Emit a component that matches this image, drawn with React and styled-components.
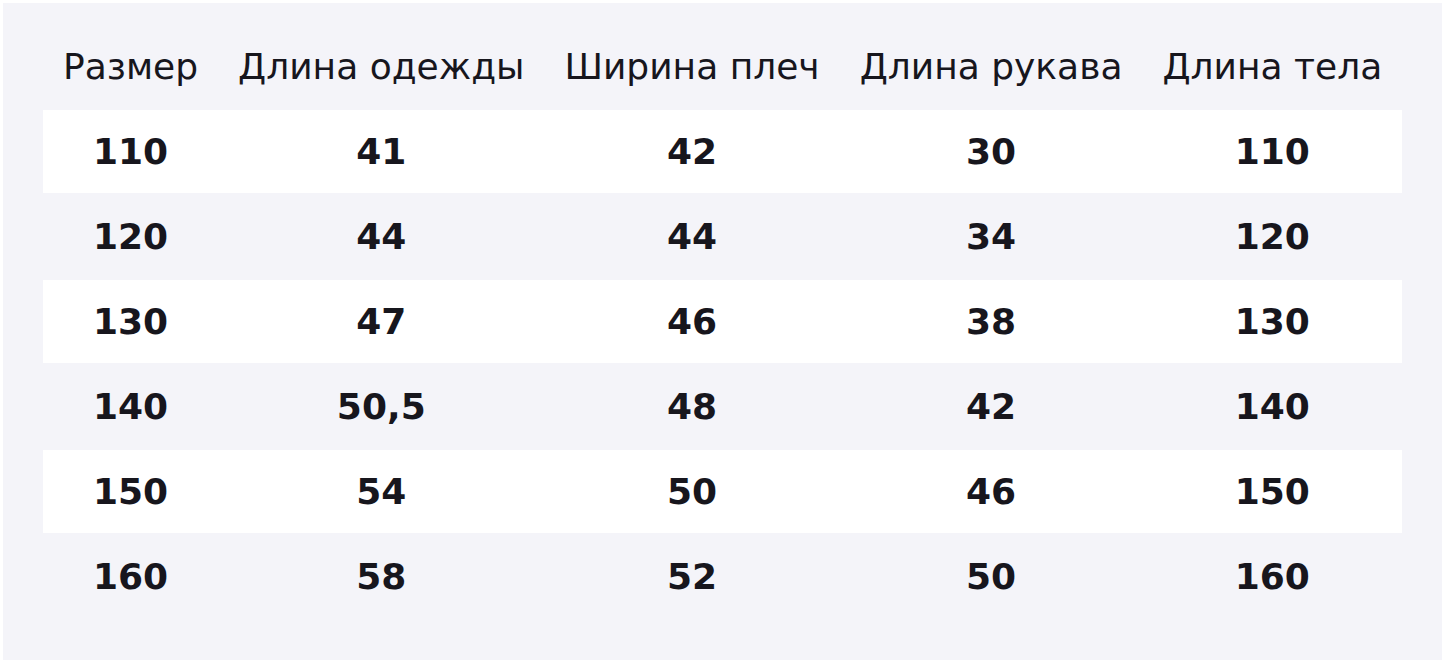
import React from "react";
import styled, { createGlobalStyle } from "styled-components";

const GlobalStyle = createGlobalStyle`
  html, body { margin: 0; padding: 0; background: #ffffff; }
  body { font-family: "DejaVu Sans", sans-serif; }
`;

const Page = styled.div`
  padding: 3px;
`;

const Panel = styled.div`
  width: 1439px;
  box-sizing: border-box;
  background: #f4f4f9;
  padding: 40px 40px 40px 40px;
`;

const Table = styled.table`
  width: 100%;
  border-collapse: collapse;
  color: #17161d;
`;

const HeadCell = styled.th`
  font-family: "DejaVu Sans", sans-serif;
  font-weight: 400;
  font-size: 36px;
  line-height: 48px;
  padding: 0 20px 19px;
  text-align: center;
  white-space: nowrap;
`;

const Row = styled.tr`
  background: ${(p) => (p.$odd ? "#ffffff" : "transparent")};
  border-bottom: 2px solid #f4f4f9;
`;

const Cell = styled.td`
  font-family: "DejaVu Sans", sans-serif;
  font-weight: 700;
  font-size: 36px;
  height: 83px;
  padding: 0 20px;
  text-align: center;
  vertical-align: middle;
`;

const headers = ["Размер", "Длина одежды", "Ширина плеч", "Длина рукава", "Длина тела"];
const rows = [
  ["110", "41", "42", "30", "110"],
  ["120", "44", "44", "34", "120"],
  ["130", "47", "46", "38", "130"],
  ["140", "50,5", "48", "42", "140"],
  ["150", "54", "50", "46", "150"],
  ["160", "58", "52", "50", "160"],
];

export default function App() {
  return (
    <>
      <GlobalStyle />
      <Page>
        <Panel>
          <Table>
            <thead>
              <tr>
                {headers.map((h) => (
                  <HeadCell key={h}>{h}</HeadCell>
                ))}
              </tr>
            </thead>
            <tbody>
              {rows.map((r, i) => (
                <Row key={i} $odd={i % 2 === 0}>
                  {r.map((c, j) => (
                    <Cell key={j}>{c}</Cell>
                  ))}
                </Row>
              ))}
            </tbody>
          </Table>
        </Panel>
      </Page>
    </>
  );
}
